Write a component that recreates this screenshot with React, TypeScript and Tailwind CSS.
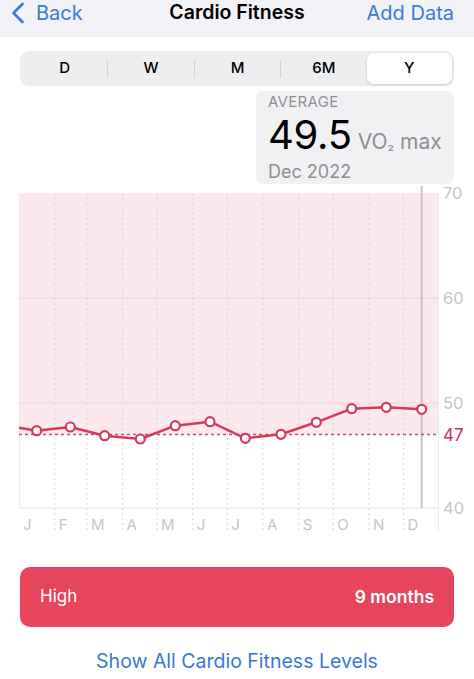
import React from "react";

const gridX = [54.7, 86.9, 122.6, 157.1, 192.8, 227.3, 263, 298.7, 333.2, 368.9, 403.4];
const monthStarts = [19, ...gridX];
const months = ["J", "F", "M", "A", "M", "J", "J", "A", "S", "O", "N", "D"];
const pts: [number, number][] = [
  [36.7, 246.7],
  [70.3, 243],
  [104.7, 251.7],
  [140.3, 255],
  [175.3, 241.7],
  [210, 237.7],
  [245.3, 254.3],
  [281, 250.3],
  [316.3, 238.3],
  [351.7, 224.7],
  [386.3, 223.3],
  [421.7, 225.3],
];

function Chart() {
  const red = "#d8385a";
  const linePts = [[19, 243.7] as [number, number], ...pts]
    .map((p) => p.join(","))
    .join(" ");
  return (
    <svg width={474} height={356} viewBox="0 0 474 356" className="block">
      <rect x={19} y={9} width={420} height={241.5} fill="#fbe9ee" />
      <line x1={19} y1={114} x2={439} y2={114} stroke="#ecd6dc" strokeWidth={1} />
      <line x1={19} y1={219} x2={439} y2={219} stroke="#ecd6dc" strokeWidth={1} />
      <line x1={19} y1={324} x2={439} y2={324} stroke="#e2e2e6" strokeWidth={1} />
      <line x1={19.5} y1={250} x2={19.5} y2={324} stroke="#ececef" strokeWidth={1} />
      <line x1={438.5} y1={9} x2={438.5} y2={349} stroke="#ececef" strokeWidth={1} />
      {gridX.map((x) => (
        <line
          key={x}
          x1={x}
          y1={9}
          x2={x}
          y2={349}
          stroke="#d6d6da"
          strokeWidth={1}
          strokeDasharray="2 3"
        />
      ))}
      <line x1={421.7} y1={2} x2={421.7} y2={324} stroke="#c4c4c8" strokeWidth={2} />
      <line
        x1={19}
        y1={250.5}
        x2={439}
        y2={250.5}
        stroke="#b05472"
        strokeWidth={1.5}
        strokeDasharray="3 3"
      />
      <polyline points={linePts} fill="none" stroke={red} strokeWidth={2.5} strokeLinejoin="round" />
      {pts.map(([x, y], i) => (
        <circle key={i} cx={x} cy={y} r={4.5} fill="#ffffff" stroke={red} strokeWidth={2.2} />
      ))}
      <g fontFamily="Inter, 'Liberation Sans', sans-serif" fontSize={16.5} fill="#c4c4c8">
        <text x={443} y={15}>70</text>
        <text x={443} y={120}>60</text>
        <text x={443} y={225}>50</text>
        <text x={443} y={330}>40</text>
        <text x={443} y={256.5} fill="#c9355a" fontSize={17}>47</text>
      </g>
      <g fontFamily="Inter, 'Liberation Sans', sans-serif" fontSize={15} fill="#c4c4c8">
        {months.map((m, i) => (
          <text key={i} x={monthStarts[i] + 4} y={345.5}>
            {m}
          </text>
        ))}
      </g>
    </svg>
  );
}

export default function App() {
  const segs = ["D", "W", "M", "6M", "Y"];
  return (
    <div
      className="w-[474px] h-[679px] bg-white overflow-hidden"
      style={{ fontFamily: "Inter, 'Liberation Sans', sans-serif" }}
    >
      <div className="h-[37px] bg-[#f2f2f7] flex items-center justify-between pl-[10px] pr-[20px] relative">
        <div className="flex items-center gap-[10px] text-[#3a7bd5] -mt-[12px]">
          <svg width="16" height="22" viewBox="0 0 16 22">
            <path d="M12.5 2 L3.5 11 L12.5 20" fill="none" stroke="#3a7bd5" strokeWidth="2.6" strokeLinecap="round" strokeLinejoin="round" />
          </svg>
          <span className="text-[20px] leading-none">Back</span>
        </div>
        <div className="absolute left-0 right-0 top-[-1px] flex justify-center pointer-events-none">
          <span className="text-[19.5px] font-semibold text-black leading-[26px]">Cardio Fitness</span>
        </div>
        <span className="text-[20px] text-[#3a7bd5] leading-none -mt-[12px]">Add Data</span>
      </div>

      <div className="mt-[14px] mx-[20px] h-[35px] rounded-[9px] bg-[#eeeef0] flex items-center p-[2px]">
        {segs.map((s, i) => (
          <React.Fragment key={s}>
            {i > 0 && i < 4 && <div className="w-px h-[18px] bg-[#d4d4d8]" />}
            <div
              className={
                s === "Y"
                  ? "flex-1 h-full flex items-center justify-center rounded-[7px] bg-white shadow-[0_1px_3px_rgba(0,0,0,0.15)] text-[15px] font-medium text-black"
                  : "flex-1 h-full flex items-center justify-center text-[15px] font-medium text-black"
              }
            >
              {s}
            </div>
          </React.Fragment>
        ))}
      </div>

      <div className="flex justify-end pr-[20px] mt-[5px]">
        <div className="w-[198px] h-[93px] rounded-[7px] bg-[#f1f1f4] pl-[12px] pt-[3px] flex flex-col">
          <span className="text-[15px] text-[#8e8e93] leading-[16px] tracking-[0.3px]">AVERAGE</span>
          <div className="flex items-baseline gap-[6px] h-[40px] mt-[5px]">
            <span className="text-[40px] leading-none text-black tracking-[-0.3px]">49.5</span>
            <span className="text-[21px] leading-none text-[#8e8e93]">
              VO<span className="text-[15px]">₂</span> max
            </span>
          </div>
          <span className="text-[18px] text-[#8e8e93] leading-[22px] mt-[6px]">Dec 2022</span>
        </div>
      </div>

      <Chart />

      <div className="mt-[27px] mx-[20px] h-[60px] rounded-[10px] bg-[#e6455b] flex items-center justify-between px-[20px] text-white">
        <span className="text-[17px]">High</span>
        <span className="text-[17.5px] font-semibold">9 months</span>
      </div>

      <div className="mt-[20px] flex justify-center">
        <span className="text-[19.5px] text-[#3a78d2]">Show All Cardio Fitness Levels</span>
      </div>
    </div>
  );
}
